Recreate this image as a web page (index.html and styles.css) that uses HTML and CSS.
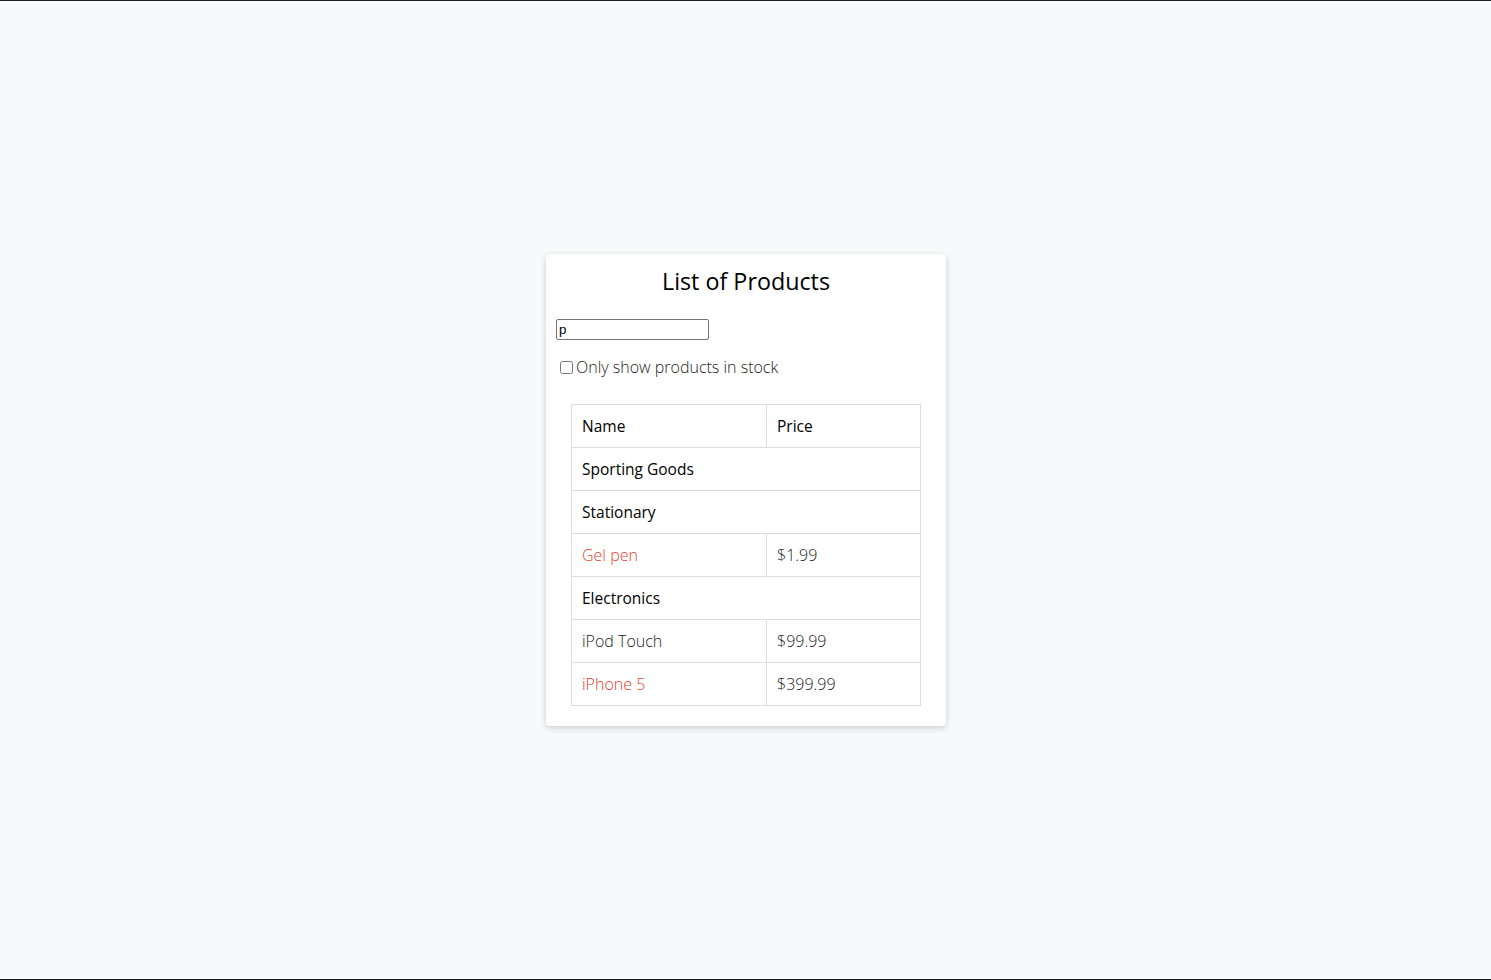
FILE: index.html
```html
<!DOCTYPE html>
<html lang="en">
<head>
    <meta charset="UTF-8">
    <meta name="viewport" content="width=device-width, initial-scale=1.0">
    <title>List of Products</title>
    <link rel="stylesheet" href="styles.css">
</head>
<body>
    <div class="pagina">
        <div class="tarjeta">
            <h1 class="titulo">List of Products</h1>

            <form class="filtros">
                <input type="text" class="buscador" value="p">
                <label class="etiqueta-stock">
                    <input type="checkbox">Only show products in stock
                </label>
            </form>

            <table class="tabla-productos">
                <thead>
                    <tr>
                        <th class="col-nombre">Name</th>
                        <th>Price</th>
                    </tr>
                </thead>
                <tbody>
                    <tr><th colspan="2">Sporting Goods</th></tr>
                    <tr><th colspan="2">Stationary</th></tr>
                    <tr>
                        <td class="agotado">Gel pen</td>
                        <td>$1.99</td>
                    </tr>
                    <tr><th colspan="2">Electronics</th></tr>
                    <tr>
                        <td>iPod Touch</td>
                        <td>$99.99</td>
                    </tr>
                    <tr>
                        <td class="agotado">iPhone 5</td>
                        <td>$399.99</td>
                    </tr>
                </tbody>
            </table>
        </div>
    </div>
</body>
</html>
```

FILE: styles.css
```css
body {
    margin: 0;
    padding: 0;
    font-family: "Open Sans", Arial, sans-serif;
    background-color: #f8f9fa;
    color: #000;
}

.pagina {
    box-sizing: border-box;
    height: 100vh;
    border-top: 1px solid #1e1e1e;
    border-bottom: 1px solid #1e1e1e;
    display: flex;
    align-items: center;
    justify-content: center;
}

.tarjeta {
    box-sizing: border-box;
    width: 400px;
    margin-left: 1px;
    padding: 10px 10px 20px;
    background-color: #fff;
    border-radius: 4px;
    box-shadow: 0 2px 6px rgba(0, 0, 0, 0.18);
}

.titulo {
    margin: 0 0 20px;
    font-size: 23.3px;
    line-height: 35px;
    font-weight: 400;
    text-align: center;
}

.filtros {
    margin: 0;
}

.buscador {
    display: block;
    width: 153px;
    height: 21px;
    box-sizing: border-box;
    margin: 0 0 16px;
    padding: 1px 2px;
    border: 1px solid #767676;
    border-radius: 2px;
    font-family: Arial, sans-serif;
    font-size: 13.33px;
}

.etiqueta-stock {
    display: block;
    font-size: 16px;
    font-weight: 300;
    line-height: 22px;
    color: #222;
}

.etiqueta-stock input {
    margin: 3px 3px 3px 4px;
    vertical-align: -1px;
}

.tabla-productos {
    width: 350px;
    margin: 26px auto 0;
    border-collapse: collapse;
    font-size: 16px;
}

.tabla-productos th,
.tabla-productos td {
    border: 1px solid #dcdcdc;
    padding: 10px;
    text-align: left;
    line-height: 22px;
}

.tabla-productos th {
    font-size: 15.5px;
    font-weight: 400;
    color: #000;
}

.tabla-productos td {
    font-weight: 300;
    color: #222;
}

.col-nombre {
    width: 174px;
}

.tabla-productos td.agotado {
    color: #e2402c;
}
```
